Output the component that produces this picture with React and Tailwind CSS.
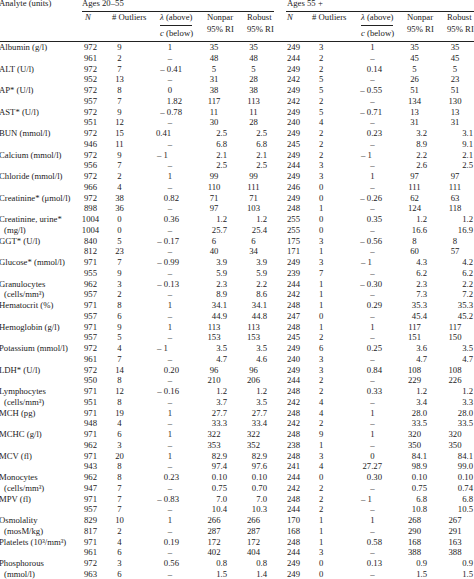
import React from "react";

const D = "–";
const rows = [
  ["Albumin (g/l)", null, ["972","9","1","35","35","249","3","1","35","35"], ["961","2",D,"48","48","244","2",D,"45","45"]],
  ["ALT (U/l)", null, ["972","7",">– 0.41","5","5","249","2","0.14","5","5"], ["952","13",D,"31","28","242","5",D,"26","23"]],
  ["AP* (U/l)", null, ["972","8","0","38","38","249","5","– 0.55","51","51"], ["957","7",">1.82","117","113","242","2",D,"134","130"]],
  ["AST* (U/l)", null, ["972","9",">– 0.78","11","11","249","5","– 0.71","13","13"], ["951","12",D,"30","28","240","4",D,"31","31"]],
  ["BUN (mmol/l)", null, ["972","15","<0.41","2.5","2.5","249","2","0.23","3.2","3.1"], ["946","11",D,"6.8","6.8","245","2",D,"8.9","9.1"]],
  ["Calcium (mmol/l)", null, ["972","9","– 1","2.1","2.1","249","2","– 1","2.2","2.1"], ["956","7",D,"2.5","2.5","244","3",D,"2.6","2.5"]],
  ["Chloride (mmol/l)", null, ["972","2","1","99","99","249","3","1","97","97"], ["966","4",D,"110","111","246","0",D,"111","111"]],
  ["Creatinine* (μmol/l)", null, ["972","38","0.82","71","71","249","0","– 0.26","62","63"], ["898","36",D,"97","103","248","1",D,"124","118"]],
  ["Creatinine, urine*", "(mg/l)", ["1004","0","0.36","1.2","1.2","255","0","0.35","1.2","1.2"], ["1004","0",D,"25.7","25.4","255","0",D,"16.6","16.9"]],
  ["GGT* (U/l)", null, ["840","5","– 0.17","6","6","175","3","– 0.56","8","8"], ["812","23",D,"40","34","171","1",D,"60","57"]],
  ["Glucose* (mmol/l)", null, ["971","7","– 0.99","3.9","3.9","249","3","– 1","4.3","4.2"], ["955","9",D,"5.9","5.9","239","7",D,"6.2","6.2"]],
  ["Granulocytes", "(cells/mm³)", ["962","3","– 0.13","2.3","2.2","244","1","– 0.30","2.3","2.2"], ["957","2",D,"8.9","8.6","242","1",D,"7.3","7.2"]],
  ["Hematocrit (%)", null, ["971","8","1","34.1","34.1","248","1","0.29","35.3","35.3"], ["957","6",D,"44.9","44.8","247","0",D,"45.4","45.2"]],
  ["Hemoglobin (g/l)", null, ["971","9","1","113","113","248","1","1","117","117"], ["957","5",D,"153","153","245","2",D,"151","150"]],
  ["Potassium (mmol/l)", null, ["972","4","– 1","3.5","3.5","249","6","0.25","3.6","3.5"], ["961","7",D,"4.7","4.6","240","3",D,"4.7","4.7"]],
  ["LDH* (U/l)", null, ["972","14","0.20","96","96","249","3","0.84","108","108"], ["950","8",D,"210","206","244","2",D,"229","226"]],
  ["Lymphocytes", "(cells/mm³)", ["971","12","– 0.16","1.2","1.2","248","2","0.33","1.2","1.2"], ["951","8",D,"3.7","3.5","242","4",D,"3.4","3.3"]],
  ["MCH (pg)", null, ["971","19","1","27.7","27.7","248","4","1","28.0","28.0"], ["948","4",D,"33.3","33.4","242","2",D,"33.5","33.5"]],
  ["MCHC (g/l)", null, ["971","6","1","322","322","248","9","1","320","320"], ["962","3",D,"353","352","238","1",D,"350","350"]],
  ["MCV (fl)", null, ["971","20","1","82.9","82.9","248","3","0","84.1","84.1"], ["943","8",D,"97.4","97.6","241","4","27.27","98.9","99.0"]],
  ["Monocytes", "(cells/mm³)", ["962","8","0.23","0.10","0.10","244","0","0.30","0.10","0.10"], ["947","7",D,"0.75","0.70","242","2",D,"0.75","0.74"]],
  ["MPV (fl)", null, ["971","7","– 0.83","7.0","7.0","248","2","– 1","6.8","6.8"], ["957","7",D,"10.4","10.3","244","2",D,"10.8","10.5"]],
  ["Osmolality", "(mosM/kg)", ["829","10","1","266","266","170","1","1","268","267"], ["817","2",D,"287","287","168","1",D,"290","291"]],
  ["Platelets (10³/mm³)", null, ["971","4","0.19","172","172","248","1","0.58","168","163"], ["961","6",D,"402","404","244","3",D,"388","388"]],
  ["Phosphorous", "(mmol/l)", ["972","3","0.56","0.8","0.8","249","0","0.13","0.9","0.9"], ["963","6",D,"1.5","1.4","249","0",D,"1.5","1.5"]],
];

function lamMode(v) {
  if (v.startsWith(">")) return ["R2", v.slice(1)];
  if (v.startsWith("<")) return ["L2", v.slice(1)];
  if (v.includes(".")) return ["R", v];
  if (v.startsWith("– ")) return ["L", v];
  return ["C", v];
}

function LamLeft({ v }) {
  const [m, t] = lamMode(v);
  const cls =
    m === "R" ? "text-right pr-[21px]" :
    m === "R2" ? "text-right pr-[18px]" :
    m === "L" ? "text-left pl-[19px]" :
    m === "L2" ? "text-left pl-[18px]" :
    "text-center pl-[2px]";
  return <div className={"w-[62px] shrink-0 " + cls}>{t}</div>;
}

function LamRight({ v }) {
  const [m, t] = lamMode(v);
  const cls =
    m === "R" || m === "R2" ? "text-right pr-[18px]" :
    m === "L" || m === "L2" ? "text-left pl-[16px]" :
    "text-center";
  return <div className={"w-[55px] shrink-0 " + cls}>{t}</div>;
}

function Cell({ v, w, dec, int }) {
  const isDec = v.includes(".");
  return <div className={w + " shrink-0 " + (isDec ? dec : int)}>{v}</div>;
}

function Row({ label, sub, v }) {
  return (
    <div className="flex h-[10.76px] leading-[10.76px] whitespace-nowrap">
      <div className="w-[80px] shrink-0">
        {label ? <span className="ml-[-1px]">{label}</span> : sub ? <span className="pl-[4px]">{sub}</span> : null}
      </div>
      <div className="w-[21px] shrink-0 text-center">{v[0]}</div>
      <div className="w-[37px] shrink-0 text-center">{v[1]}</div>
      <LamLeft v={v[2]} />
      <Cell v={v[3]} w="w-[34px]" dec="text-right pr-[7px]" int="text-center pr-[6px]" />
      <Cell v={v[4]} w="w-[40px]" dec="text-right pr-[7px]" int="text-center pr-[1px]" />
      <div className="w-[30px] shrink-0 pl-[13px]">{v[5]}</div>
      <div className="w-[41px] shrink-0 pl-[15px]">{v[6]}</div>
      <LamRight v={v[7]} />
      <Cell v={v[8]} w="w-[38px]" dec="text-right pr-[11px]" int="text-center pr-[9px]" />
      <Cell v={v[9]} w="w-[36px]" dec="text-right pr-[1px]" int="text-center pr-[2px]" />
    </div>
  );
}

function SubHeader({ widths }) {
  const [wN, wO, wL, wNP, wRB, pN, pO, pL, pNP, pRB] = widths;
  return (
    <div className="flex h-[29px] whitespace-nowrap">
      <div className={wN + " shrink-0 leading-[11px] italic " + pN}>N</div>
      <div className={wO + " shrink-0 leading-[11px] " + pO}># Outliers</div>
      <div className={wL + " shrink-0 " + pL}>
        <div className="w-fit border-b border-[#222] leading-[11px] pb-[1.5px]"><i>λ</i> (above)</div>
        <div className="leading-[11px] pt-[2px]"><i>c</i> (below)</div>
      </div>
      <div className={wNP + " shrink-0 leading-[11.5px] " + pNP}>Nonpar<br />95% RI</div>
      <div className={wRB + " shrink-0 leading-[11.5px] " + pRB}>Robust<br />95% RI</div>
    </div>
  );
}

export default function App() {
  return (
    <div className="w-[474px] h-[579px] overflow-hidden bg-white text-[#222] text-[8.7px] font-['Liberation_Serif','Times_New_Roman',serif]">
      <div className="mt-[-3px] flex border-b border-[#222] whitespace-nowrap">
        <div className="w-[80px] shrink-0 leading-[12px]"><span className="ml-[-1px]">Analyte (units)</span></div>
        <div className="w-[194px] shrink-0">
          <div className="ml-[2px] h-[15px] border-b border-[#222] leading-[12px]">Ages 20–55</div>
          <SubHeader widths={["w-[21px]", "w-[37px]", "w-[62px]", "w-[34px]", "w-[40px]", "pl-[5px]", "pl-[11px]", "pl-[22px]", "pl-[7px]", "pl-[13px]"]} />
        </div>
        <div className="w-[200px] shrink-0">
          <div className="ml-[12px] h-[15px] border-b border-[#222] leading-[12px] pl-[1px]">Ages 55 +</div>
          <SubHeader widths={["w-[30px]", "w-[41px]", "w-[55px]", "w-[38px]", "w-[36px]", "pl-[13px]", "pl-[8px]", "pl-[16px]", "pl-[7px]", "pl-[9px]"]} />
        </div>
      </div>
      <div>
        {rows.map((r, i) => (
          <React.Fragment key={i}>
            <Row label={r[0]} v={r[2]} />
            <Row sub={r[1]} v={r[3]} />
          </React.Fragment>
        ))}
      </div>
    </div>
  );
}
